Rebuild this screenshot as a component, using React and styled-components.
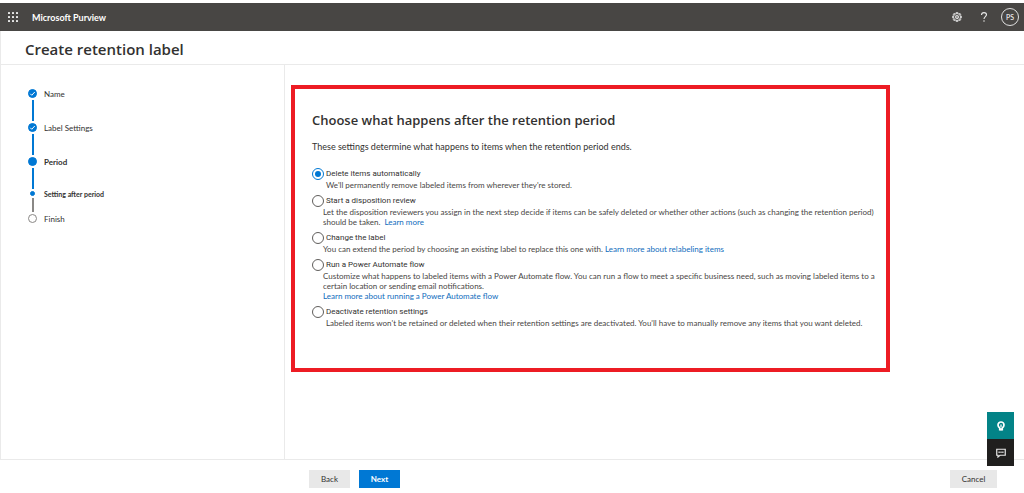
import { useState } from "react";
import styled, { createGlobalStyle } from "styled-components";

const steps = [
  { label: "Name", status: "done" },
  { label: "Label Settings", status: "done" },
  { label: "Period", status: "current" },
  { label: "Setting after period", status: "sub" },
  { label: "Finish", status: "todo" },
];

const options = [
  {
    id: "delete",
    title: "Delete items automatically",
    text: "We'll permanently remove labeled items from wherever they're stored.",
    indented: true,
  },
  {
    id: "review",
    title: "Start a disposition review",
    text: "Let the disposition reviewers you assign in the next step decide if items can be safely deleted or whether other actions (such as changing the retention period) should be taken.",
    link: "Learn more",
    spaced: true,
  },
  {
    id: "change",
    title: "Change the label",
    text: "You can extend the period by choosing an existing label to replace this one with.",
    link: "Learn more about relabeling items",
  },
  {
    id: "flow",
    title: "Run a Power Automate flow",
    text: "Customize what happens to labeled items with a Power Automate flow. You can run a flow to meet a specific business need, such as moving labeled items to a certain location or sending email notifications.",
    link: "Learn more about running a Power Automate flow",
    linkOnNewLine: true,
  },
  {
    id: "deactivate",
    title: "Deactivate retention settings",
    text: "Labeled items won't be retained or deleted when their retention settings are deactivated. You'll have to manually remove any items that you want deleted.",
    indented: true,
  },
];

export default function App() {
  const [selected, setSelected] = useState("delete");

  return (
    <Page>
      <GlobalStyle />
      <TopBar>
        <WaffleButton aria-label="App launcher">
          <WaffleIcon />
        </WaffleButton>
        <Brand>Microsoft Purview</Brand>
        <TopActions>
          <IconButton aria-label="Settings">
            <GearIcon />
          </IconButton>
          <IconButton aria-label="Help">
            <HelpIcon />
          </IconButton>
          <Avatar aria-label="Account">PS</Avatar>
        </TopActions>
      </TopBar>

      <TitleBar>
        <h1>Create retention label</h1>
      </TitleBar>

      <Body>
        <Sidebar>
          <StepList>
            {steps.map((step, index) => (
              <li key={step.label}>
                <StepRow $status={step.status}>
                  <StepMarker>
                    <StepDot $status={step.status}>
                      {step.status === "done" && <CheckIcon />}
                    </StepDot>
                  </StepMarker>
                  <span>{step.label}</span>
                </StepRow>
                {index < steps.length - 1 && (
                  <Connector $pending={step.status === "sub"} />
                )}
              </li>
            ))}
          </StepList>
        </Sidebar>

        <Main>
          <Highlight>
            <h2>Choose what happens after the retention period</h2>
            <Intro>
              These settings determine what happens to items when the retention
              period ends.
            </Intro>
            <OptionList>
              {options.map((option) => (
                <li key={option.id}>
                  <OptionLabel htmlFor={option.id}>
                    <Radio
                      id={option.id}
                      type="radio"
                      name="afterPeriod"
                      checked={selected === option.id}
                      onChange={() => setSelected(option.id)}
                    />
                    {option.title}
                  </OptionLabel>
                  <OptionText $indented={option.indented}>
                    {option.text}
                    {option.linkOnNewLine ? <br /> : " "}
                    {option.link && (
                      <OptionLink href="#learn" $spaced={option.spaced}>
                        {option.link}
                      </OptionLink>
                    )}
                  </OptionText>
                </li>
              ))}
            </OptionList>
          </Highlight>
        </Main>
      </Body>

      <Footer>
        <Button>Back</Button>
        <Button $primary>Next</Button>
        <CancelButton>Cancel</CancelButton>
      </Footer>

      <FloatingTools>
        <ToolButton $color="#038387" aria-label="Need help?">
          <BulbIcon />
        </ToolButton>
        <ToolButton $color="#201f1e" aria-label="Give feedback">
          <FeedbackIcon />
        </ToolButton>
      </FloatingTools>
    </Page>
  );
}

function WaffleIcon() {
  const cells = [0, 4, 8];
  return (
    <svg width="10" height="10" viewBox="0 0 10 10" fill="#e8e8e8">
      {cells.map((y) =>
        cells.map((x) => (
          <rect key={`${x}-${y}`} x={x} y={y} width="2" height="2" rx="0.5" />
        ))
      )}
    </svg>
  );
}

function GearIcon() {
  const teeth = [0, 45, 90, 135, 180, 225, 270, 315];
  return (
    <svg width="10" height="10" viewBox="0 0 20 20" fill="none" stroke="#e0e0e0">
      <circle cx="10" cy="10" r="7" strokeWidth="2" />
      <circle cx="10" cy="10" r="2.8" strokeWidth="2.4" />
      {teeth.map((angle) => (
        <path
          key={angle}
          d="M8.4 3V0.8h3.2V3"
          strokeWidth="1.8"
          transform={`rotate(${angle} 10 10)`}
        />
      ))}
    </svg>
  );
}

function HelpIcon() {
  return (
    <svg width="8" height="10" viewBox="0 0 16 20" fill="none">
      <path
        d="M3 6C3 3 5 1.2 8 1.2S13 3 13 5.6C13 9 8 9.6 8 14"
        stroke="#e8e8e8"
        strokeWidth="2.2"
      />
      <circle cx="8" cy="18" r="1.5" fill="#e8e8e8" />
    </svg>
  );
}

function CheckIcon() {
  return (
    <svg width="9" height="9" viewBox="0 0 18 18" fill="none">
      <path d="M4.5 9.5l3 3 6-6.5" stroke="#ffffff" strokeWidth="2" />
    </svg>
  );
}

function BulbIcon() {
  return (
    <svg width="8" height="10" viewBox="0 0 16 20" fill="none">
      <path
        d="M5.5 14C3 12 2 10.500 2 8a6 6 0 0 1 12 0c0 2.500-1 4-3.500 6v3.500h-5z"
        stroke="#ffffff"
        strokeWidth="3.4"
      />
      <path d="M5.5 16.5h5" stroke="#ffffff" strokeWidth="4" />
      <path d="M8 12V7" stroke="#ffffff" strokeWidth="2.4" />
    </svg>
  );
}

function FeedbackIcon() {
  return (
    <svg width="10" height="10" viewBox="0 0 20 20" fill="none">
      <path
        d="M1.5 2.5h17v12H8l-4 3.5v-3.5H1.5z"
        stroke="#e8e8e8"
        strokeWidth="2.4"
      />
      <path
        d="M5 8.5h2.5M8.8 8.5h2.5M12.5 8.5H15"
        stroke="#e8e8e8"
        strokeWidth="2.8"
      />
    </svg>
  );
}

const GlobalStyle = createGlobalStyle`
  * {
    box-sizing: border-box;
  }

  body {
    margin: 0;
    background: #ffffff;
    color: #323130;
    font-family: Lato, "Open Sans", sans-serif;
    font-size: 8px;
  }

  h1, h2, p, ul, ol {
    margin: 0;
    padding: 0;
  }

  h1, h2 {
    font-family: "Open Sans", "Noto Sans", sans-serif;
    font-weight: 600;
  }

  ul, ol {
    list-style: none;
  }

  button, input {
    margin: 0;
    font-family: inherit;
  }

  button {
    padding: 0;
    border: 0;
    cursor: pointer;
  }

  svg {
    display: block;
  }
`;

const Page = styled.div`
  display: flex;
  flex-direction: column;
  min-height: 100vh;
  padding-top: 3px;
`;

const TopBar = styled.header`
  display: flex;
  align-items: center;
  height: 28px;
  padding: 0 5px 0 3px;
  background: #484644;
  color: #ffffff;
`;

const IconButton = styled.button`
  display: flex;
  align-items: center;
  justify-content: center;
  width: 20px;
  height: 20px;
  background: transparent;
`;

const WaffleButton = styled(IconButton)`
  margin-right: 9px;
`;

const Brand = styled.span`
  font-size: 9px;
  font-weight: 700;
`;

const TopActions = styled.div`
  display: flex;
  align-items: center;
  gap: 7px;
  margin-left: auto;
`;

const Avatar = styled.button`
  width: 18px;
  height: 18px;
  border: 1px solid #e0e0e0;
  border-radius: 50%;
  background: transparent;
  color: #ffffff;
  font-size: 7px;
  line-height: 16px;
`;

const TitleBar = styled.div`
  display: flex;
  align-items: center;
  height: 34px;
  padding: 2px 24px 0;
  border-left: 1px solid #eaeaea;
  border-bottom: 1px solid #eaeaea;

  h1 {
    font-size: 15px;
    line-height: 20px;
  }
`;

const Body = styled.div`
  display: flex;
  flex: 1;
  border-left: 1px solid #eaeaea;
`;

const Sidebar = styled.nav`
  flex: 0 0 284px;
  padding: 24px 27px;
  border-right: 1px solid #eaeaea;
`;

const StepList = styled.ol`
  display: flex;
  flex-direction: column;
`;

const StepRow = styled.div`
  display: flex;
  align-items: center;
  gap: 7px;
  height: ${({ $status }) => ($status === "sub" ? "5px" : "9px")};
  font-size: ${({ $status }) => ($status === "sub" ? "7px" : "8px")};
  font-weight: ${({ $status }) =>
    $status === "sub" || $status === "current" ? 700 : 400};
  line-height: 10px;
`;

const StepMarker = styled.span`
  display: flex;
  justify-content: center;
  width: 9px;
`;

const StepDot = styled.span`
  width: ${({ $status }) => ($status === "sub" ? "5px" : "9px")};
  height: ${({ $status }) => ($status === "sub" ? "5px" : "9px")};
  border: 1px solid ${({ $status }) => ($status === "todo" ? "#8a8886" : "#0078d4")};
  border-radius: 50%;
  background: ${({ $status }) => ($status === "todo" ? "#ffffff" : "#0078d4")};

  svg {
    margin: -1px;
  }
`;

const Connector = styled.div`
  width: 2px;
  height: ${({ $pending }) => ($pending ? "14px" : "21px")};
  margin: 2px 0 2px 4px;
  background: ${({ $pending }) => ($pending ? "#8a8886" : "#0078d4")};
`;

const Main = styled.main`
  flex: 1;
  min-width: 0;
  padding: 20px 6px;
`;

const Highlight = styled.section`
  max-width: 599px;
  padding: 22px 8px 40px 17px;
  border: 4px solid #ed1c24;

  h2 {
    font-size: 13px;
    line-height: 18px;
  }
`;

const Intro = styled.p`
  margin-top: 12px;
  font-size: 9px;
  line-height: 12px;
`;

const OptionList = styled.ul`
  display: flex;
  flex-direction: column;
  gap: 5px;
  margin-top: 15px;
`;

const OptionLabel = styled.label`
  display: flex;
  align-items: center;
  gap: 2px;
  height: 12px;
  font-family: Roboto, "Open Sans", sans-serif;
  font-size: 8px;
  line-height: 12px;
  cursor: pointer;
`;

const Radio = styled.input`
  display: grid;
  place-items: center;
  width: 12px;
  height: 12px;
  appearance: none;
  border: 1px solid #605e5c;
  border-radius: 50%;

  &:checked {
    border-color: #0078d4;
  }

  &:checked::before {
    content: "";
    width: 6px;
    height: 6px;
    border-radius: 50%;
    background: #0078d4;
  }
`;

const OptionText = styled.p`
  padding-left: ${({ $indented }) => ($indented ? "14px" : "11px")};
  color: #484644;
  font-size: 8px;
  line-height: 10px;
`;

const OptionLink = styled.a`
  margin-left: ${({ $spaced }) => ($spaced ? "2px" : "0")};
  color: #0f6cbd;
  text-decoration: none;
`;

const Footer = styled.footer`
  display: flex;
  align-items: center;
  gap: 9px;
  height: 34px;
  padding: 4px 27px 0 309px;
  border-top: 1px solid #eaeaea;
`;

const Button = styled.button`
  width: 41px;
  height: 18px;
  background: ${({ $primary }) => ($primary ? "#0078d4" : "#e8e8e8")};
  color: ${({ $primary }) => ($primary ? "#ffffff" : "#323130")};
  font-size: 8px;
  font-weight: ${({ $primary }) => ($primary ? 700 : 400)};
  line-height: 18px;
`;

const CancelButton = styled(Button)`
  width: 47px;
  margin-left: auto;
`;

/* stays in the corner, over the footer line */
const FloatingTools = styled.aside`
  position: fixed;
  right: 10px;
  bottom: 27px;
  display: flex;
  flex-direction: column;
`;

const ToolButton = styled.button`
  display: flex;
  align-items: center;
  justify-content: center;
  width: 27px;
  height: 27px;
  background: ${({ $color }) => $color};
`;
